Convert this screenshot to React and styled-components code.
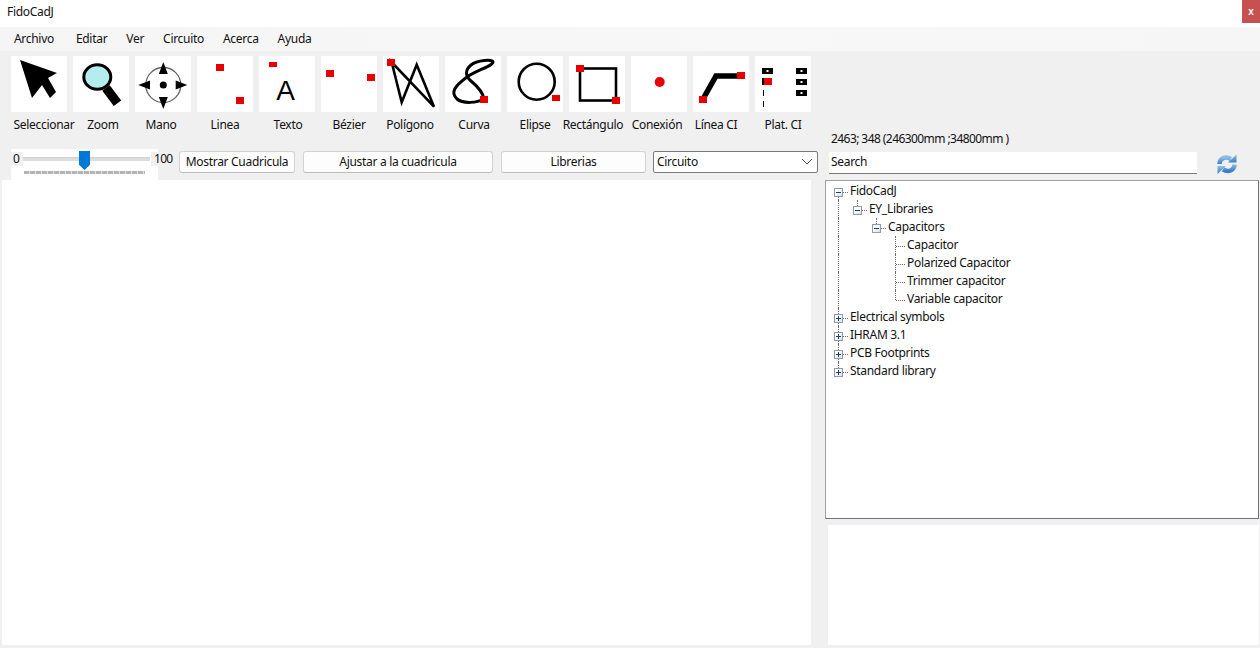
import React from 'react';
import styled, { createGlobalStyle } from 'styled-components';

const GlobalStyle = createGlobalStyle`
  html, body { margin: 0; padding: 0; background: #f0f0f0; }
  body { font-family: "Noto Sans", "Open Sans", sans-serif; font-size: 12px; letter-spacing: -0.3px; color: #111; }
`;

const Window = styled.div`
  width: 1260px;
  height: 648px;
  display: flex;
  flex-direction: column;
  overflow: hidden;
`;

const TitleBar = styled.div`
  height: 27px;
  flex: none;
  display: flex;
  justify-content: space-between;
  background: #fff;
`;

const Title = styled.span`
  padding: 4px 0 0 7px;
  line-height: 16px;
`;

const CloseButton = styled.button`
  width: 18px;
  height: 23px;
  padding: 0;
  border: 0;
  background: #c75050;
  color: #fff;
  font: bold 10px/20px "Liberation Sans", sans-serif;
`;

const MenuBar = styled.nav`
  height: 24px;
  box-sizing: border-box;
  flex: none;
  display: flex;
  align-items: center;
  gap: 19px;
  padding: 0 0 0 14px;
  background: linear-gradient(90deg, #f5f5f5 0%, #f8f8f8 60%, #f6f6f6 100%);
`;

const MenuItem = styled.span`
  line-height: 16px;
  margin-right: ${(p) => p.$extra || 0}px;
`;

const Workspace = styled.div`
  flex: 1;
  min-height: 0;
  display: grid;
  grid-template-columns: 825px 435px;
`;

const LeftColumn = styled.div`
  display: flex;
  flex-direction: column;
  padding-bottom: 3px;
  min-height: 0;
`;

const ToolRow = styled.div`
  display: flex;
  gap: 6px;
  padding: 5px 0 0 11px;
  height: 98px;
  box-sizing: border-box;
  flex: none;
`;

const Tool = styled.div`
  width: 56px;
  display: flex;
  flex-direction: column;
  align-items: center;
`;

const Tile = styled.svg`
  width: 56px;
  height: 56px;
  flex: none;
  display: block;
  background: #fff;
`;

const ToolLabel = styled.span`
  margin-top: 6px;
  margin-left: ${(p) => p.$nudge || 0}px;
  line-height: 14px;
  white-space: nowrap;
`;

const ControlRow = styled.div`
  height: 31px;
  flex: none;
  display: flex;
  align-items: flex-start;
  padding-left: 11px;
`;

const SliderPanel = styled.div`
  width: 147px;
  height: 31px;
  flex: none;
  display: flex;
  align-items: flex-start;
  background: #fff;
  margin-right: 21px;
`;

const SliderValue = styled.span`
  flex: none;
  width: ${(p) => p.$width}px;
  height: 14px;
  margin-top: 3px;
  padding-left: ${(p) => p.$pad}px;
  box-sizing: border-box;
  background: #f0f0f0;
  line-height: 14px;
  letter-spacing: -0.7px;
`;

const SliderBody = styled.div`
  position: relative;
  flex: none;
  width: 127px;
  height: 31px;
  margin-right: 1px;
`;

const SliderTrack = styled.div`
  position: absolute;
  left: 0;
  right: 0;
  top: 8px;
  height: 4px;
  background: #dcdcdc;
  border-top: 1px solid #d2d2d2;
  box-sizing: border-box;
`;

const SliderThumb = styled.div`
  position: absolute;
  top: 2px;
  width: 11px;
  height: 19px;
  background: #0078d7;
  clip-path: polygon(0 0, 100% 0, 100% 72%, 50% 100%, 0 72%);
`;

const SliderTicks = styled.div`
  position: absolute;
  left: 1px;
  top: 22px;
  width: 121px;
  height: 3px;
  background: repeating-linear-gradient(90deg, #b4b4b4 0 5px, #e4e4e4 5px 6px);
`;

const PushButton = styled.button`
  height: 22px;
  width: ${(p) => p.$width}px;
  flex: none;
  margin: 2px 8px 0 0;
  padding: 0;
  box-sizing: border-box;
  background: #fdfdfd;
  border: 1px solid #d3d3d3;
  border-bottom-color: #bdbdbd;
  border-radius: 3px;
  font: inherit;
  letter-spacing: inherit;
  color: inherit;
  line-height: 18px;
`;

const Select = styled.div`
  width: 165px;
  height: 22px;
  flex: none;
  margin: 2px 0 0 -1px;
  box-sizing: border-box;
  display: flex;
  align-items: center;
  justify-content: space-between;
  padding: 0 4px 2px 3px;
  background: #fff;
  border: 1px solid #7a7a7a;
  border-radius: 2px;
`;

const Canvas = styled.div`
  flex: 1;
  width: 809px;
  margin-left: 2px;
  background: #fff;
`;

const RightColumn = styled.div`
  display: flex;
  flex-direction: column;
  padding: 80px 1px 3px 0;
  min-height: 0;
`;

const Coordinates = styled.div`
  height: 16px;
  flex: none;
  padding-left: 6px;
  line-height: 16px;
  letter-spacing: -0.57px;
`;

const SearchRow = styled.div`
  height: 33px;
  flex: none;
  display: flex;
  align-items: flex-start;
  padding: 5px 0 0 4px;
  box-sizing: border-box;
`;

const SearchBox = styled.div`
  width: 368px;
  height: 22px;
  box-sizing: border-box;
  padding-left: 2px;
  background: #fff;
  border-bottom: 1px solid #7a7a7a;
  line-height: 20px;
`;

const RefreshIcon = styled.svg`
  width: 22px;
  height: 22px;
  margin: 1px 0 0 19px;
  filter: blur(0.4px);
`;

const TreePanel = styled.div`
  height: 339px;
  flex: none;
  box-sizing: border-box;
  padding: 1px 0 0 3px;
  background: #fff;
  border: 1px solid #a0a0a0;
  border-right: 1px solid #6f7378;
  border-bottom: 1px solid #6f7378;
`;

const TreeRow = styled.div`
  height: 18px;
  display: flex;
  align-items: stretch;
`;

const TreeCell = styled.span`
  position: relative;
  flex: none;
  width: 19px;
  display: flex;
  align-items: center;
  justify-content: center;
  padding-top: 2px;
  box-sizing: border-box;

  &::before {
    content: '';
    position: absolute;
    left: 9px;
    top: ${(p) => (p.$up ? 0 : 10)}px;
    bottom: ${(p) => (p.$down ? 0 : 8)}px;
    border-left: 1px dotted ${(p) => (p.$up || p.$down ? '#6d6d6d' : 'transparent')};
  }

  &::after {
    content: '';
    position: absolute;
    left: 10px;
    right: 0;
    top: 10px;
    border-top: 1px dotted ${(p) => (p.$right ? '#6d6d6d' : 'transparent')};
  }
`;

const Expander = styled.span`
  position: relative;
  z-index: 1;
  width: 9px;
  height: 9px;
  box-sizing: border-box;
  border: 1px solid #8f9ba8;
  background: linear-gradient(135deg, #fff 30%, #d9dee4 100%);

  &::before {
    content: '';
    position: absolute;
    left: 1px;
    right: 1px;
    top: 3px;
    height: 1px;
    background: #1c3f78;
  }

  &::after {
    content: '';
    display: ${(p) => (p.$open ? 'none' : 'block')};
    position: absolute;
    top: 1px;
    bottom: 1px;
    left: 3px;
    width: 1px;
    background: #1c3f78;
  }
`;

const TreeLabel = styled.span`
  margin-left: 2px;
  line-height: 18px;
  white-space: nowrap;
`;

const InfoPanel = styled.div`
  flex: 1;
  margin: 6px 0 0 3px;
  background: #fff;
`;

const RED = '#e60000';

const Mark = ({ x, y, w = 8, h = 7 }) => <rect x={x} y={y} width={w} height={h} fill={RED} />;

const Pad = ({ x, y }) => (
  <g>
    <rect x={x} y={y} width={11} height={6} fill="#000" />
    <rect x={x + 4.5} y={y + 2} width={2} height={2} fill="#fff" />
  </g>
);

const tools = [
  {
    name: 'Seleccionar',
    nudge: 10,
    art: <polygon points="9,4 46,17 37,22 45,36 39,42 31,29 21,42" fill="#000" />,
  },
  {
    name: 'Zoom',
    nudge: 4,
    art: (
      <>
        <line x1="33" y1="32" x2="44.500" y2="47.300" stroke="#000" strokeWidth="9.3" />
        <ellipse cx="24.300" cy="21" rx="13.500" ry="12.300" fill="#b5ecec" stroke="#000" strokeWidth="3" />
      </>
    ),
  },
  {
    name: 'Mano',
    nudge: -4,
    art: (
      <>
        <circle cx="28.3" cy="29" r="17.5" fill="none" stroke="#666" strokeWidth="1.3" />
        <circle cx="28.3" cy="29" r="3.5" fill="#000" />
        <polygon points="28.3,6 32.8,18 23.8,18" fill="#000" />
        <polygon points="28.3,53 32.8,41 23.8,41" fill="#000" />
        <polygon points="3.3,29 15,24.5 15,33.5" fill="#000" />
        <polygon points="52.3,29 40.7,24.5 40.7,33.5" fill="#000" />
      </>
    ),
  },
  {
    name: 'Linea',
    art: (
      <>
        <Mark x={19} y={8} />
        <Mark x={39} y={41} />
      </>
    ),
  },
  {
    name: 'Texto',
    nudge: 2,
    art: (
      <>
        <Mark x={10} y={6} h={5} />
        <text x="26.5" y="44" textAnchor="middle" fontFamily="Liberation Sans, sans-serif" fontSize="28" letterSpacing="0" fill="#000">A</text>
      </>
    ),
  },
  {
    name: 'Bézier',
    art: (
      <>
        <Mark x={5} y={14} />
        <Mark x={46} y={18} />
      </>
    ),
  },
  {
    name: 'Polígono',
    nudge: -2,
    art: (
      <>
        <polygon points="8.7,6.3 18.7,46.3 33.7,8.7 51,50.7" fill="none" stroke="#000" strokeWidth="2.6" />
        <Mark x={4} y={3} />
      </>
    ),
  },
  {
    name: 'Curva',
    nudge: 2,
    art: (
      <>
        <path
          d="M39 43C32 47 18 48 12 43C5 36 10 30 22 21C32 14 48 10 48 6C48 3 32 4 26 9C20 14 20 20 26 25C32 30 38 36 39 43"
          fill="none"
          stroke="#000"
          strokeWidth="3"
        />
        <Mark x={35} y={40} />
      </>
    ),
  },
  {
    name: 'Elipse',
    art: (
      <>
        <circle cx="29.7" cy="25.7" r="18" fill="none" stroke="#000" strokeWidth="2.6" />
        <Mark x={45} y={39} h={6} />
      </>
    ),
  },
  {
    name: 'Rectángulo',
    nudge: -8,
    art: (
      <>
        <rect x="11" y="12.5" width="36" height="32" fill="none" stroke="#000" strokeWidth="2.6" />
        <Mark x={7} y={9} />
        <Mark x={43} y={41} />
      </>
    ),
  },
  {
    name: 'Conexión',
    nudge: -4,
    art: <circle cx="28.7" cy="26" r="5" fill={RED} />,
  },
  {
    name: 'Línea CI',
    nudge: -10,
    art: (
      <>
        <polyline points="10,43 23,20 48,20" fill="none" stroke="#000" strokeWidth="5.5" />
        <Mark x={44} y={16} />
        <Mark x={6} y={40} />
      </>
    ),
  },
  {
    name: 'Plat. CI',
    art: (
      <>
        <Pad x={7} y={12} />
        <Pad x={41} y={12} />
        <Pad x={41} y={23} />
        <Pad x={41} y={34} />
        <rect x={7} y={22} width={4} height={7} fill="#000" />
        <Mark x={9} y={22} />
        <rect x={8} y={34} width={1} height={6} fill="#000" />
        <rect x={8} y={45} width={1} height={6} fill="#000" />
      </>
    ),
  },
];

const menus = [['Archivo', 3], ['Editar'], ['Ver'], ['Circuito'], ['Acerca'], ['Ayuda']];

// each row: guide cells, then the cell that holds the expander or the elbow
const trunk = { up: true, down: true };
const tree = [
  { label: 'FidoCadJ', open: true, node: { down: true, right: true } },
  { label: 'EY_Libraries', guides: [trunk], open: true, node: { up: true, right: true } },
  { label: 'Capacitors', guides: [trunk, {}], open: true, node: { up: true, right: true } },
  { label: 'Capacitor', guides: [trunk, {}, {}], node: { up: true, down: true, right: true } },
  { label: 'Polarized Capacitor', guides: [trunk, {}, {}], node: { up: true, down: true, right: true } },
  { label: 'Trimmer capacitor', guides: [trunk, {}, {}], node: { up: true, down: true, right: true } },
  { label: 'Variable capacitor', guides: [trunk, {}, {}], node: { up: true, right: true } },
  { label: 'Electrical symbols', closed: true, node: { up: true, down: true, right: true } },
  { label: 'IHRAM 3.1', closed: true, node: { up: true, down: true, right: true } },
  { label: 'PCB Footprints', closed: true, node: { up: true, down: true, right: true } },
  { label: 'Standard library', closed: true, node: { up: true, right: true } },
];

const App = () => {
  return (
    <Window>
      <GlobalStyle />
      <TitleBar>
        <Title>FidoCadJ</Title>
        <CloseButton>x</CloseButton>
      </TitleBar>
      <MenuBar>
        {menus.map(([name, extra]) => (
          <MenuItem key={name} $extra={extra}>{name}</MenuItem>
        ))}
      </MenuBar>
      <Workspace>
        <LeftColumn>
          <ToolRow>
            {tools.map((tool) => (
              <Tool key={tool.name}>
                <Tile viewBox="0 0 56 56">{tool.art}</Tile>
                <ToolLabel $nudge={tool.nudge}>{tool.name}</ToolLabel>
              </Tool>
            ))}
          </ToolRow>
          <ControlRow>
            <SliderPanel>
              <SliderValue $width={12} $pad={2}>0</SliderValue>
              <SliderBody>
                <SliderTrack />
                <SliderThumb style={{ left: `${(100 * 56) / 127}%` }} />
                <SliderTicks />
              </SliderBody>
              <SliderValue $width={22} $pad={3}>100</SliderValue>
            </SliderPanel>
            <PushButton $width={116}>Mostrar Cuadricula</PushButton>
            <PushButton $width={190}>Ajustar a la cuadricula</PushButton>
            <PushButton $width={145}>Librerias</PushButton>
            <Select>
              Circuito
              <svg width="12" height="7" viewBox="0 0 12 7">
                <polyline points="1,1 6,6 11,1" fill="none" stroke="#555" strokeWidth="1" />
              </svg>
            </Select>
          </ControlRow>
          <Canvas />
        </LeftColumn>
        <RightColumn>
          <Coordinates>2463; 348 (246300mm ;34800mm )</Coordinates>
          <SearchRow>
            <SearchBox>Search</SearchBox>
            <RefreshIcon viewBox="0 0 22 22">
              <defs>
                <linearGradient id="refresh" x1="0" y1="0" x2="0" y2="1">
                  <stop offset="0" stopColor="#8fbde6" />
                  <stop offset="1" stopColor="#3c7fc4" />
                </linearGradient>
              </defs>
              <path d="M3.5 11C3.5 6 9 2.5 15 6" fill="none" stroke="url(#refresh)" strokeWidth="4.5" />
              <polygon points="12,9.5 20.5,9.5 20.5,1.5" fill="url(#refresh)" />
              <path d="M18.5 11.5C18.5 16.5 13 20 7 16.500" fill="none" stroke="url(#refresh)" strokeWidth="4.5" />
              <polygon points="10,13 1.500,13 1.500,21" fill="url(#refresh)" />
            </RefreshIcon>
          </SearchRow>
          <TreePanel>
            {tree.map((row) => (
              <TreeRow key={row.label}>
                {(row.guides || []).map((guide, i) => (
                  <TreeCell key={i} $up={guide.up} $down={guide.down} />
                ))}
                <TreeCell $up={row.node.up} $down={row.node.down} $right={row.node.right}>
                  {(row.open || row.closed) && <Expander $open={row.open} />}
                </TreeCell>
                <TreeLabel>{row.label}</TreeLabel>
              </TreeRow>
            ))}
          </TreePanel>
          <InfoPanel />
        </RightColumn>
      </Workspace>
    </Window>
  );
};

export default App;
